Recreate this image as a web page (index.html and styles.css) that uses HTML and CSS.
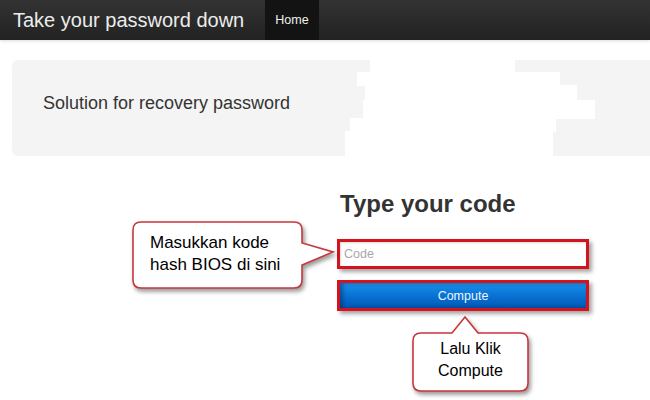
FILE: index.html
```html
<!DOCTYPE html>
<html>
<head>
<meta charset="utf-8">
<title>Take your password down</title>
<link rel="stylesheet" href="styles.css">
</head>
<body>
<div class="page">
  <header class="navbar">
    <span class="brand">Take your password down</span>
    <nav class="nav"><a class="nav-item active" href="#">Home</a></nav>
  </header>

  <section class="jumbotron">
    <p class="lead">Solution for recovery password</p>
    <div class="smudge s1"></div>
    <div class="smudge s2"></div>
    <div class="smudge s3"></div>
    <div class="smudge s4"></div>
    <div class="smudge s5"></div>
    <div class="smudge s6"></div>
  </section>

  <section class="form-area">
    <h2 class="form-title">Type your code</h2>
    <input class="code-input" type="text" placeholder="Code">
    <button class="compute-btn" type="button">Compute</button>
  </section>

  <div class="callout callout-left">
    <svg class="callout-shape" width="215" height="78" viewBox="0 0 215 78">
      <path d="M13,4 H166 Q174,4 174,12 V25 L205,34 L174,47 V62 Q174,70 166,70 H13 Q5,70 5,62 V12 Q5,4 13,4 Z" fill="#fff" stroke="#c9363c" stroke-width="1.6"/>
    </svg>
    <div class="callout-text left-text">Masukkan kode<br>hash BIOS di sini</div>
  </div>

  <div class="callout callout-bottom">
    <svg class="callout-shape" width="126" height="85" viewBox="0 0 126 85">
      <path d="M13,21 H44 L57,5 L70,21 H112 Q120,21 120,29 V71 Q120,79 112,79 H13 Q5,79 5,71 V29 Q5,21 13,21 Z" fill="#fff" stroke="#c9363c" stroke-width="1.6"/>
    </svg>
    <div class="callout-text bottom-text">Lalu Klik<br>Compute</div>
  </div>
</div>
</body>
</html>
```

FILE: styles.css
```css
html, body {
  margin: 0;
  padding: 0;
  background: #fff;
  overflow: hidden;
}

.page {
  position: relative;
  width: 650px;
  height: 400px;
  overflow: hidden;
  font-family: "Liberation Sans", Arial, sans-serif;
  color: #333;
}

.navbar {
  height: 40px;
  display: flex;
  align-items: stretch;
  padding-left: 13px;
  background: linear-gradient(#333333, #222222);
  box-shadow: 0 1px 3px rgba(0, 0, 0, 0.15);
}

.brand {
  display: flex;
  align-items: center;
  font-size: 20px;
  color: #ececec;
  margin-right: 21px;
}

.nav {
  display: flex;
}

.nav-item {
  display: flex;
  align-items: center;
  padding: 0 10px;
  font-size: 12.5px;
  color: #f0f0f0;
  text-decoration: none;
}

.nav-item.active {
  background: #131313;
  width: 34px;
}

.jumbotron {
  position: relative;
  box-sizing: border-box;
  margin: 20px -30px 0 12px;
  height: 96px;
  background: #f4f4f4;
  border-radius: 6px;
  display: flex;
  align-items: center;
  padding: 0 0 9px 31px;
}

.lead {
  margin: 0;
  font-size: 18px;
  color: #333;
}

.smudge {
  position: absolute;
  background: #fff;
}
.s1 { left: 358px; top: 0; width: 145px; height: 13px; }
.s2 { left: 345px; top: 12px; width: 203px; height: 14px; }
.s3 { left: 353px; top: 25px; width: 212px; height: 16px; }
.s4 { left: 351px; top: 40px; width: 232px; height: 19px; }
.s5 { left: 338px; top: 58px; width: 206px; height: 14px; }
.s6 { left: 333px; top: 71px; width: 208px; height: 25px; }

.form-area {
  display: flex;
  flex-direction: column;
  align-items: flex-start;
  padding-left: 337px;
}

.form-title {
  margin: 34px 0 0 3px;
  font-size: 24px;
  line-height: 28px;
  font-weight: bold;
  color: #333;
}

.code-input {
  box-sizing: border-box;
  margin: 21px 0 0 0;
  width: 252px;
  height: 30px;
  border: 3px solid #d3141c;
  background: #fff;
  box-shadow: inset 1px 1px 2px rgba(0, 0, 0, 0.15), 3px 3px 4px rgba(0, 0, 0, 0.35);
  padding: 0 4px;
  font-family: "Liberation Sans", Arial, sans-serif;
  font-size: 12.5px;
  color: #555;
  outline: none;
}

.code-input::placeholder {
  color: #a8a8a8;
}

.compute-btn {
  box-sizing: border-box;
  margin: 11px 0 0 0;
  width: 252px;
  height: 31px;
  border: 3px solid #d3141c;
  background: linear-gradient(#1a8fe9, #0770d2 55%, #0259b6);
  box-shadow: inset 3px 0 4px rgba(0, 30, 90, 0.45), 3px 3px 4px rgba(0, 0, 0, 0.35);
  font-family: "Liberation Sans", Arial, sans-serif;
  font-size: 12.5px;
  color: #eef6ff;
  padding: 0;
}

.callout {
  position: absolute;
}

.callout-left {
  left: 128px;
  top: 218px;
  width: 215px;
  height: 78px;
}

.callout-bottom {
  left: 408px;
  top: 312px;
  width: 126px;
  height: 85px;
}

.callout-shape {
  display: block;
  filter: drop-shadow(2px 3px 2px rgba(0, 0, 0, 0.4));
}

.callout-text {
  position: absolute;
  color: #000;
}

.left-text {
  left: 22px;
  top: 14px;
  font-size: 17px;
  line-height: 22px;
}

.bottom-text {
  left: 5px;
  width: 115px;
  top: 26px;
  text-align: center;
  font-size: 16px;
  line-height: 22px;
}
```
